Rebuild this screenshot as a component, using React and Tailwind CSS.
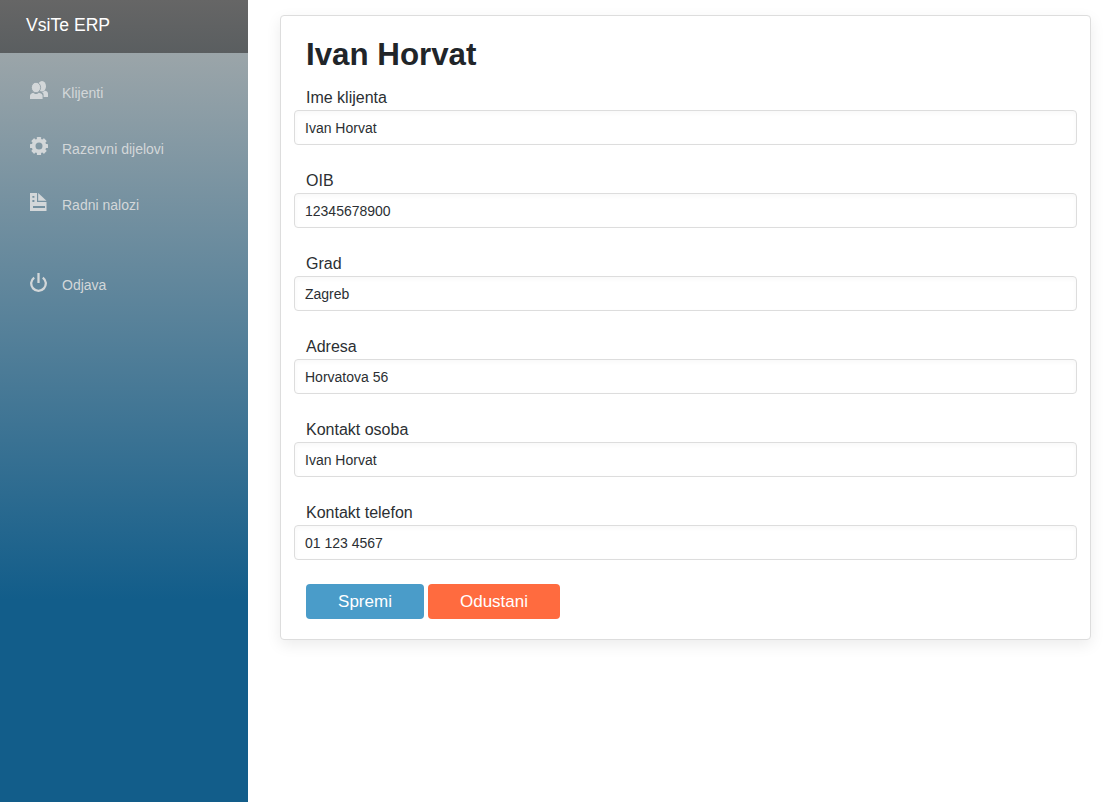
import React from "react";

function UsersIcon() {
  return (
    <svg width="18" height="18" viewBox="0 0 18 18" fill="currentColor">
      <ellipse cx="12" cy="5.2" rx="4" ry="5.2" />
      <ellipse cx="6" cy="6.5" rx="4.6" ry="5.2" stroke="#8b9aa2" strokeWidth="0.8" />
      <path d="M0 18V14.8C0 13.2 1.4 12.4 3.2 11.8C4.2 12.7 5 13 6 13C7 13 8 12.7 8.8 11.8C11 12.3 12.6 13.2 12.6 14.8V18Z" />
      <path d="M13.6 16V14.2C13.6 12.8 13 11.8 12 11C13 11 14 10.4 14.6 9.4C16.6 9.9 18 10.8 18 12.4V16Z" />
    </svg>
  );
}

function GearIcon() {
  const teeth = [0, 45, 90, 135, 180, 225, 270, 315];
  return (
    <svg width="18" height="18" viewBox="0 0 18 18" fill="currentColor">
      {teeth.map((a) => (
        <rect key={a} x="6.9" y="0" width="4.2" height="4" rx="0.6" transform={`rotate(${a} 9 9)`} />
      ))}
      <circle cx="9" cy="9" r="5.4" fill="none" stroke="currentColor" strokeWidth="3.8" />
    </svg>
  );
}

function FileIcon() {
  return (
    <svg width="18" height="18" viewBox="0 0 18 18" fill="currentColor">
      <path
        fillRule="evenodd"
        d="M0 0H7V9H16.5V18H0ZM2.4 3V4.8H4.4V3ZM2.4 7V9H4.4V7ZM3 13V15H15V13Z"
      />
      <path d="M8.2 0L16.5 7.8H8.2Z" />
    </svg>
  );
}

function PowerIcon() {
  return (
    <svg width="18" height="19" viewBox="0 0 18 19" fill="none" stroke="currentColor" strokeWidth="2.3">
      <path d="M8.5 0V10" />
      <path d="M4.2 4.6A7.3 7.3 0 1 0 12.8 4.6" />
    </svg>
  );
}

function NavItem({ icon, label, className = "" }) {
  return (
    <div className={`flex h-[56px] items-center pl-[30px] text-[#d3d7d9] ${className}`}>
      <span className="flex h-[20px] w-[32px] shrink-0 -translate-y-[3px] items-center">{icon}</span>
      <span className="text-[14px] leading-[20px]">{label}</span>
    </div>
  );
}

function Field({ label, value }) {
  return (
    <div className="mb-[14px] h-[69px]">
      <div className="pl-[12px] text-[16px] leading-[24px] text-[#2b2f33]">{label}</div>
      <input
        readOnly
        value={value}
        className="h-[35px] w-full rounded-[4px] border border-[#dddddd] bg-white px-[10px] text-[14px] text-[#2b2f33] shadow-[inset_0_2px_4px_rgba(0,0,0,0.03)] outline-none"
      />
    </div>
  );
}

export default function App() {
  const fields = [
    ["Ime klijenta", "Ivan Horvat"],
    ["OIB", "12345678900"],
    ["Grad", "Zagreb"],
    ["Adresa", "Horvatova 56"],
    ["Kontakt osoba", "Ivan Horvat"],
    ["Kontakt telefon", "01 123 4567"],
  ];
  return (
    <div className="flex min-h-[802px] bg-white font-['Liberation_Sans',Arial,sans-serif]">
      <aside className="w-[248px] shrink-0 bg-[linear-gradient(to_bottom,#9ba5a9_53px,#125d8a_600px)]">
        <div className="h-[53px] bg-[linear-gradient(to_bottom,#666666,#5a5e60)] pl-[26px] pt-[14px] text-[17.6px] leading-[22px] text-white">
          VsiTe ERP
        </div>
        <nav className="pt-[12px]">
          <NavItem icon={<UsersIcon />} label="Klijenti" />
          <NavItem icon={<GearIcon />} label="Razervni dijelovi" />
          <NavItem icon={<FileIcon />} label="Radni nalozi" />
          <NavItem icon={<PowerIcon />} label="Odjava" className="mt-[24px]" />
        </nav>
      </aside>
      <main className="min-w-0 flex-1 pl-[32px] pr-[15px] pt-[15px]">
        <div className="rounded-[4px] border border-[#dddddd] bg-white px-[13px] pb-[20px] pt-[21px] shadow-[0_5px_15px_rgba(0,0,0,0.08)]">
          <h1 className="pl-[12px] text-[31.3px] font-bold leading-[36px] text-[#212529]">Ivan Horvat</h1>
          <div className="mt-[13px]">
            {fields.map(([l, v]) => (
              <Field key={l} label={l} value={v} />
            ))}
          </div>
          <div className="mt-[10px] flex gap-[4px] pl-[12px]">
            <button className="h-[35px] w-[118px] rounded-[4px] bg-[#4a9cc9] text-[17px] text-white">Spremi</button>
            <button className="h-[35px] w-[132px] rounded-[4px] bg-[#ff6b3f] text-[17px] text-white">Odustani</button>
          </div>
        </div>
      </main>
    </div>
  );
}
